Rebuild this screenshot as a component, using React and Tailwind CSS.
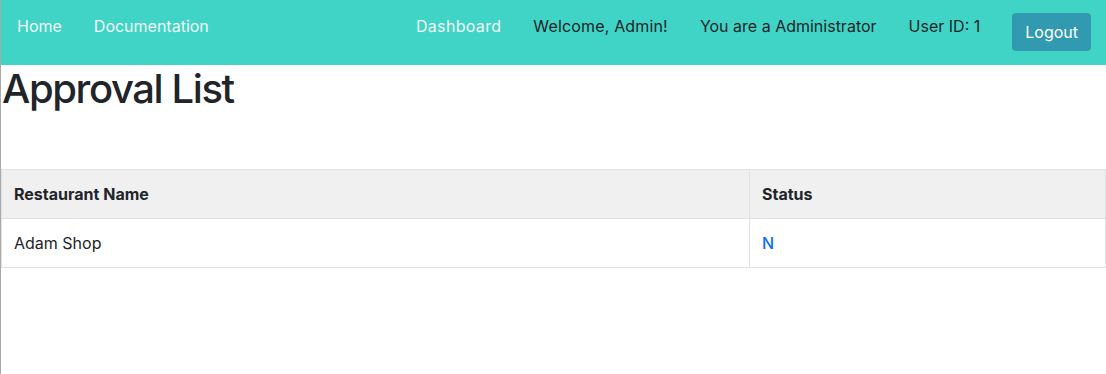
import React from 'react';

const approvals = [{ id: 1, name: 'Adam Shop', status: 'N' }];

export default function App() {
  return (
    <div
      className="min-h-[374px] bg-white border-l border-[#a9a9a9] text-[#212529]"
      style={{ fontFamily: 'Inter, "Liberation Sans", sans-serif' }}
    >
      {/* Navbar */}
      <nav className="h-[65px] bg-[#3fd4c5] flex items-start justify-between pt-[14px] pl-4 pr-[15px]">
        <div className="flex items-center gap-8 text-[16px] leading-6 text-[#f3f5f5]">
          <a href="#">Home</a>
          <a href="#">Documentation</a>
        </div>
        <div className="flex items-start gap-8 text-[16px] leading-6">
          <a href="#" className="text-[#f3f5f5] tracking-[0.02em]">Dashboard</a>
          <span className="tracking-[0.01em]">Welcome, Admin!</span>
          <span>You are a Administrator</span>
          <span>User ID: 1</span>
          <button className="h-[38px] px-[13px] -mt-px bg-[#3199b0] text-white rounded-[4px] leading-6">
            Logout
          </button>
        </div>
      </nav>

      {/* Content */}
      <h1 className="text-[40px] leading-[48px] font-medium tracking-[-1.4px] pl-px mb-[56px]">
        Approval List
      </h1>

      <table className="w-full border-collapse text-[16px]">
        <thead>
          <tr className="bg-[#f0f0f0]">
            <th className="w-[748px] h-[49px] px-3 text-left font-bold border border-[#dee2e6]">
              Restaurant Name
            </th>
            <th className="h-[49px] px-3 text-left font-bold border border-[#dee2e6]">Status</th>
          </tr>
        </thead>
        <tbody>
          {approvals.map((a) => (
            <tr key={a.id}>
              <td className="h-[49px] px-3 border border-[#dee2e6]">{a.name}</td>
              <td className="h-[49px] px-3 border border-[#dee2e6]">
                <a href="#" className="text-[#0d6efd] font-medium">{a.status}</a>
              </td>
            </tr>
          ))}
        </tbody>
      </table>
    </div>
  );
}
